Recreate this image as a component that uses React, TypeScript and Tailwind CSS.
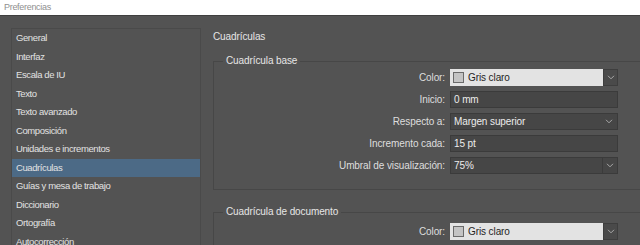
// Preferencias > Cuadrículas panel (InDesign-style dark dialog).

const sections = [
  "General",
  "Interfaz",
  "Escala de IU",
  "Texto",
  "Texto avanzado",
  "Composición",
  "Unidades e incrementos",
  "Cuadrículas",
  "Guías y mesa de trabajo",
  "Diccionario",
  "Ortografía",
  "Autocorrección",
];

function Chevron() {
  return (
    <svg width="8" height="5" viewBox="0 0 8 5">
      <path d="M1 0.8l3 3 3-3" fill="none" stroke="#a9a9a9" strokeWidth="1" />
    </svg>
  );
}

function Row({ label, children }: { label: string; children: React.ReactNode }) {
  return (
    <div className="flex items-center h-[17px]">
      <div className="w-[232px] shrink-0 text-right pr-[1px] text-[#dedede]">{label}</div>
      <div className="ml-[4px] w-[168px] shrink-0 h-[17px] flex">{children}</div>
    </div>
  );
}

function SwatchField({ value }: { value: string }) {
  return (
    <>
      <div className="w-[153px] h-full bg-[#e3e3e3] flex items-center pl-[3px] text-[#1f1f1f]">
        <span className="w-[11px] h-[11px] bg-[#c4c4c4] border border-[#6a6a6a] mr-[4px]" />
        {value}
      </div>
      <div className="flex-1 h-full bg-[#4a4a4a] border border-[#3e3e3e] flex items-center justify-center">
        <Chevron />
      </div>
    </>
  );
}

function TextField({ value }: { value: string }) {
  return (
    <div className="w-full h-full bg-[#464646] border border-[#3b3b3b] flex items-center pl-[3px] text-[#ececec]">
      {value}
    </div>
  );
}

function SelectField({ value }: { value: string }) {
  return (
    <div className="w-full h-full bg-[#464646] border border-[#3b3b3b] flex items-center pl-[3px] pr-[4px] text-[#ececec]">
      <span className="flex-1">{value}</span>
      <Chevron />
    </div>
  );
}

function ComboField({ value }: { value: string }) {
  return (
    <div className="w-full h-full bg-[#464646] border border-[#3b3b3b] flex items-center text-[#ececec]">
      <span className="flex-1 pl-[3px]">{value}</span>
      <div className="w-[15px] h-full border-l border-[#3b3b3b] flex items-center justify-center">
        <Chevron />
      </div>
    </div>
  );
}

export default function App() {
  return (
    <div className="w-[640px] h-[245px] overflow-hidden bg-[#535353] font-['Liberation_Sans',Arial,sans-serif] select-none">
      <div className="h-[16px] bg-white border-b border-[#3f3f3f] pl-[4px] text-[9px] tracking-[-0.3px] leading-[14px] text-[#8f8f8f]">
        Preferencias
      </div>

      <div className="flex pt-[12px] pl-[11px]">
        <div className="w-[190px] shrink-0 h-[240px] border border-[#4a4a4a] text-[9.5px] tracking-[-0.4px] text-[#e2e2e2]">
          {sections.map((s) => (
            <div
              key={s}
              className={
                "h-[18.5px] leading-[18.5px] pl-[4px] " +
                (s === "Cuadrículas" ? "bg-[#4c6a86]" : "")
              }
            >
              {s}
            </div>
          ))}
        </div>

        <div className="ml-[12px] w-[470px] shrink-0 flex flex-col text-[10px] tracking-[-0.1px]">
          <div className="h-[18px] leading-[18px] text-[#e6e6e6]">Cuadrículas</div>

          <fieldset className="mt-[8px] w-[470px] border border-[#474747] pt-[1px] pb-[15px] flex flex-col gap-[5px]">
            <legend className="ml-[9px] px-[3px] leading-[14px] text-[#e6e6e6]">
              Cuadrícula base
            </legend>
            <Row label="Color:">
              <SwatchField value="Gris claro" />
            </Row>
            <Row label="Inicio:">
              <TextField value="0 mm" />
            </Row>
            <Row label="Respecto a:">
              <SelectField value="Margen superior" />
            </Row>
            <Row label="Incremento cada:">
              <TextField value="15 pt" />
            </Row>
            <Row label="Umbral de visualización:">
              <ComboField value="75%" />
            </Row>
          </fieldset>

          <fieldset className="mt-[15px] w-[470px] border border-[#474747] pt-[4px] pb-[15px] flex flex-col gap-[5px]">
            <legend className="ml-[9px] px-[3px] leading-[14px] text-[#e6e6e6]">
              Cuadrícula de documento
            </legend>
            <Row label="Color:">
              <SwatchField value="Gris claro" />
            </Row>
          </fieldset>
        </div>
      </div>
    </div>
  );
}
